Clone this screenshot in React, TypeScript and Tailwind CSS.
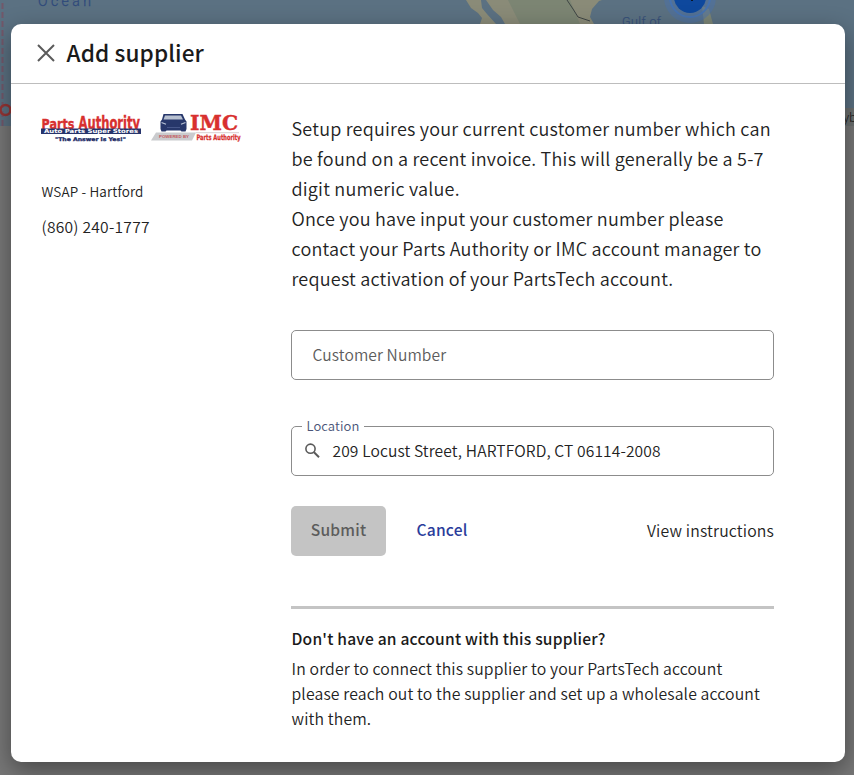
import { useState } from "react";

function MapBackdrop() {
  return (
    <svg
      className="absolute inset-x-0 top-0"
      width="854"
      height="126"
      viewBox="0 0 854 126"
      aria-hidden="true"
    >
      <rect width="854" height="126" fill="#5b7182" />
      <path
        d="M466 0 L471 8 L478 13 L482 18 L480 24 L496 24 L487 14 L482 8 L481 0 L486 0 L493 10 L501 17 L505 24 L594 24 L590 17 L592 9 L599 1 L602 0 Z"
        fill="#8a8b78"
      />
      <path d="M508 0 L570 0 L580 24 L520 24 Z" fill="#7c8573" />
      <path
        d="M567 0 L573 9 L578 17 L590 21"
        fill="none"
        stroke="#3f4544"
        strokeWidth="1"
      />
      <path d="M702 6 L709 9 L713 24 L704 24 Z" fill="#7b8475" />
      <circle cx="690" cy="-3" r="26" fill="#4a72ad" opacity="0.45" />
      <circle
        cx="690"
        cy="-3"
        r="20"
        fill="none"
        stroke="#4672b0"
        strokeWidth="2"
      />
      <circle cx="690" cy="-3" r="16" fill="#0e489d" />
      <rect x="691" y="0" width="2" height="1" fill="#0b1626" />
      <text
        x="38"
        y="6"
        fill="#2f4a7b"
        stroke="#2f4a7b"
        strokeWidth="0.3"
        fontFamily="Roboto, sans-serif"
        fontSize="14"
        textLength="53"
      >
        Ocean
      </text>
      <text
        x="622"
        y="26"
        fill="#36507a"
        stroke="#36507a"
        strokeWidth="0.2"
        fontFamily="Roboto, sans-serif"
        fontSize="12.5"
        textLength="39"
      >
        Gulf of
      </text>
      <path d="M2.5 3 V126" stroke="#73586a" strokeWidth="2" strokeDasharray="6 3" />
      <circle
        cx="5.5"
        cy="110"
        r="5"
        fill="none"
        stroke="#963434"
        strokeWidth="2.5"
      />
      <rect x="843" y="108" width="11" height="18" fill="#6c7070" />
      <text
        x="843"
        y="122"
        fill="#1c1c1c"
        fontFamily="Roboto, sans-serif"
        fontSize="13"
      >
        yb
      </text>
    </svg>
  );
}

function PartsAuthorityLogo() {
  return (
    <svg width="100" height="30" viewBox="0 0 100 30">
      <g fontFamily="DejaVu Sans, sans-serif" fontWeight="700">
        <text
          x="0.5"
          y="14.5"
          fontSize="14.5"
          fill="#d8302f"
          stroke="#d8302f"
          strokeWidth="0.4"
          textLength="33"
          lengthAdjust="spacingAndGlyphs"
        >
          Parts
        </text>
        <text
          x="37.5"
          y="14.5"
          fontSize="18.5"
          fill="#d8302f"
          stroke="#d8302f"
          strokeWidth="0.4"
          textLength="61.5"
          lengthAdjust="spacingAndGlyphs"
        >
          Authority
        </text>
        <rect x="0" y="14.5" width="100" height="5.5" fill="#27346c" />
        <text
          x="3"
          y="19.3"
          fontSize="5.6"
          fill="#ffffff"
          textLength="94"
          lengthAdjust="spacingAndGlyphs"
        >
          Auto Parts Super Stores
        </text>
        <text
          x="14"
          y="26.7"
          fontSize="5"
          fill="#1d2a66"
          stroke="#1d2a66"
          strokeWidth="0.3"
          textLength="71"
          lengthAdjust="spacingAndGlyphs"
        >
          "The Answer is Yes!"
        </text>
      </g>
    </svg>
  );
}

function ImcLogo() {
  return (
    <svg width="92" height="30" viewBox="0 0 92 30">
      <path
        d="M12.5 0 H31.5 L34 5.5 L35.5 7.5 V15 L34.5 17.5 H30.5 L29.5 16.5 H15.5 L14.5 17.5 H10.5 L9.5 15 V7.5 L11 5.5 Z"
        fill="#27376b"
      />
      <path d="M14 1.6 H30 L32 5.5 H12.5 Z" fill="#b7c0d0" />
      <path d="M10.5 8.5 L15 10.3 M34.5 8.5 L30 10.3" stroke="#b9c3d6" strokeWidth="1.2" />
      <path d="M16 13.5 H29" stroke="#46568a" strokeWidth="1" />
      <text
        x="39"
        y="16.3"
        fontFamily="DejaVu Serif, serif"
        fontWeight="700"
        fontSize="20"
        fill="#d8302f"
        stroke="#d8302f"
        strokeWidth="0.4"
        textLength="48"
        lengthAdjust="spacingAndGlyphs"
      >
        IMC
      </text>
      <path d="M5 18.5 H45 L41 26.5 H0 Z" fill="#cacbce" />
      <path d="M45 18.7 H88" stroke="#d9cfd1" strokeWidth="1" />
      <text
        x="8"
        y="24"
        fontFamily="Liberation Sans, sans-serif"
        fontWeight="700"
        fontSize="4"
        fill="#c4585c"
        textLength="30"
        lengthAdjust="spacingAndGlyphs"
      >
        POWERED BY
      </text>
      <text
        x="45.5"
        y="26.3"
        fontFamily="DejaVu Sans, sans-serif"
        fontWeight="700"
        fontSize="7.5"
        fill="#d8302f"
        stroke="#d8302f"
        strokeWidth="0.3"
        textLength="44"
        lengthAdjust="spacingAndGlyphs"
      >
        Parts Authority
      </text>
    </svg>
  );
}

export default function App() {
  const [customerNumber, setCustomerNumber] = useState("");

  return (
    <div className="relative h-[775px] w-[854px] overflow-hidden bg-[#777777] px-[11px] pt-6 font-['Noto_Sans_CJK_SC',sans-serif] font-[350]">
      <MapBackdrop />

      <div
        role="dialog"
        className="relative h-[738px] w-[834px] rounded-[10px] bg-white text-[#222222] shadow-[0_8px_24px_rgba(0,0,0,0.4)]"
      >
        <div className="flex h-[60px] items-center border-b border-[#bdbdbd] pl-[26px]">
          <button aria-label="Close" className="mb-0.5">
            <svg width="18" height="18" viewBox="0 0 18 18">
              <path
                d="M1 1 L17 17 M17 1 L1 17"
                stroke="#5a5a5a"
                strokeWidth="2"
              />
            </svg>
          </button>
          <h1 className="mb-0.5 ml-[11.5px] text-[22.6px] leading-[30px] font-medium tracking-[0.1px] text-[#1a1a1a]">
            Add supplier
          </h1>
        </div>

        <div className="flex pr-[71px] pl-[30px]">
          <div className="w-[250px] pt-[30px]">
            <div className="flex gap-[10px]">
              <PartsAuthorityLogo />
              <ImcLogo />
            </div>
            <p className="mt-[37px] pl-[0.5px] text-[13.5px] leading-5 tracking-[0.15px]">
              WSAP - Hartford
            </p>
            <p className="mt-[14px] pl-[0.5px] text-[15.6px] leading-[22px] tracking-[0.25px]">
              (860) 240-1777
            </p>
          </div>

          <div className="w-[483px] pt-[29px]">
            <p className="pl-[0.5px] text-[18px] leading-[30px] tracking-[0.22px] whitespace-nowrap">
              Setup requires your current customer number which can
              <br />
              be found on a recent invoice. This will generally be a 5-7
              <br />
              digit numeric value.
              <br />
              Once you have input your customer number please
              <br />
              contact your Parts Authority or IMC account manager to
              <br />
              request activation of your PartsTech account.
            </p>

            <input
              value={customerNumber}
              onChange={(e) => setCustomerNumber(e.target.value)}
              placeholder="Customer Number"
              className="mt-[37px] block h-[50px] w-full rounded-[5px] border border-[#8c8c8c] px-[20.5px] pb-0.5 text-[15.6px] tracking-[0.1px] placeholder:text-[#5c5c5c]"
            />

            <div className="relative mt-[46px] flex h-[50px] items-center rounded-[5px] border border-[#8c8c8c] pl-[13px]">
              <span className="absolute -top-[11px] left-[10px] bg-white pr-[5px] pl-[4.5px] text-[13px] leading-5 tracking-[0.1px] text-[#4a5578]">
                Location
              </span>
              <svg width="16" height="16" viewBox="0 0 16 16" fill="none">
                <circle cx="5.5" cy="5.7" r="4.6" stroke="#5a5a5a" strokeWidth="1.6" />
                <path d="M9 9.3 L14 14.3" stroke="#5a5a5a" strokeWidth="2" />
              </svg>
              <span className="mb-0.5 ml-[11.5px] text-[15.6px] leading-6 tracking-[0.12px] whitespace-nowrap">
                209 Locust Street, HARTFORD, CT 06114-2008
              </span>
            </div>

            <div className="mt-[30px] flex h-[50px] items-center">
              <button
                disabled
                className="h-[50px] w-[95px] rounded-[5px] bg-[#c4c4c4] pb-0.5 text-[15.6px] font-medium tracking-[0.2px] text-[#5c5c5c]"
              >
                Submit
              </button>
              <button className="ml-[30.5px] pb-0.5 text-[15.6px] font-medium tracking-[0.2px] text-[#2a3c9b]">
                Cancel
              </button>
              <a href="#" className="ml-auto text-[15.8px] leading-6 tracking-[0.15px]">
                View instructions
              </a>
            </div>

            <div className="mt-[50px] border-t-[3px] border-[#c4c4c4] pt-[17px] pl-[0.5px]">
              <h2 className="text-[15.6px] leading-[25px] font-medium tracking-[0.2px] text-[#1a1a1a]">
                Don't have an account with this supplier?
              </h2>
              <p className="mt-[5px] text-[15.8px] leading-[25px] tracking-[0.13px] whitespace-nowrap">
                In order to connect this supplier to your PartsTech account
                <br />
                please reach out to the supplier and set up a wholesale account
                <br />
                with them.
              </p>
            </div>
          </div>
        </div>
      </div>
    </div>
  );
}
